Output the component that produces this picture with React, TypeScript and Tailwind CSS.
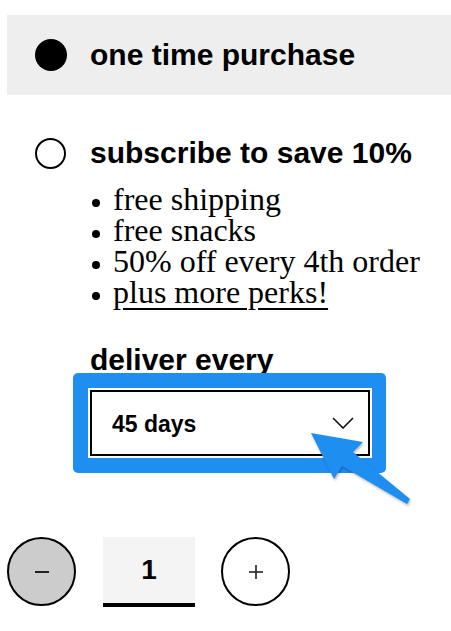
import { useState } from 'react';

const sans = { fontFamily: '"Liberation Sans", Arial, sans-serif' };
const serif = { fontFamily: '"Liberation Serif", "Times New Roman", serif' };

const perks = ['free shipping', 'free snacks', '50% off every 4th order'];

const Radio = ({ checked }: { checked?: boolean }) =>
  checked ? (
    <span className="block w-[32px] h-[32px] rounded-full bg-black shrink-0" />
  ) : (
    <span className="block w-[31px] h-[31px] rounded-full border-2 border-black bg-white shrink-0" />
  );

const Bullet = () => (
  <span className="w-[23px] shrink-0">
    <span className="block mt-[15px] ml-[2px] w-[8px] h-[8px] rounded-full bg-black" />
  </span>
);

const App = () => {
  const [qty, setQty] = useState(1);

  return (
    <div className="relative w-[451px] h-[631px] overflow-hidden bg-white pt-[15px] pl-[7px] text-black" style={sans}>
      {/* one time */}
      <div className="flex items-center h-[80px] bg-[#eeeeee] pl-[28px]">
        <Radio checked />
        <span className="ml-[23px] text-[30px] leading-[36px] font-bold">one time purchase</span>
      </div>

      {/* subscribe */}
      <div className="mt-[40px] flex items-center h-[36px] pl-[28px]">
        <Radio />
        <span className="ml-[24px] text-[30px] leading-[36px] font-bold">subscribe to save 10%</span>
      </div>

      <div className="pl-[83px]">
        <ul className="mt-[13px] text-[32px] leading-[31px]" style={serif}>
          {perks.map((p) => (
            <li key={p} className="flex">
              <Bullet />
              <span>{p}</span>
            </li>
          ))}
          <li className="flex">
            <Bullet />
            <a href="#" className="underline decoration-2 underline-offset-[5px]">plus more perks!</a>
          </li>
        </ul>

        <div className="mt-[34px] text-[30px] leading-[36px] font-bold">deliver every</div>

        <div className="relative mt-[12px] w-[280px]">
          <div className="absolute -top-[17px] -bottom-[17px] -left-[17px] -right-[16px] rounded-[5px] bg-[#1f8ef1]" />
          <div className="absolute -inset-[2px] bg-white" />
          <div className="relative flex items-center justify-between h-[66px] border-2 border-black bg-white pl-[20px] pr-[14px]">
            <span className="text-[23px] font-bold mt-[3px]">45 days</span>
            <svg width="22" height="12" viewBox="0 0 22 12" fill="none" stroke="#111" strokeWidth="1.6">
              <polyline points="1,1 11,11 21,1" />
            </svg>
          </div>
        </div>
      </div>

      {/* annotation arrow */}
      <svg
        className="absolute left-0 top-0 pointer-events-none"
        width="451"
        height="631"
        style={{ filter: 'drop-shadow(1px 2px 1px rgba(0,0,0,0.25))' }}
      >
        <polygon
          points="311,433 363,442 353,452 410,499 407,504 342,466 334,479"
          fill="#1f8ef1"
        />
      </svg>

      {/* quantity */}
      <div className="mt-[81px] flex items-start">
        <button
          onClick={() => setQty(Math.max(1, qty - 1))}
          className="flex items-center justify-center w-[69px] h-[69px] rounded-full border-2 border-black bg-[#cccccc]"
        >
          <span className="block w-[14px] h-[2px] bg-[#222]" />
        </button>
        <div className="ml-[27px] flex items-center justify-center w-[92px] h-[70px] bg-[#f4f4f4] border-b-4 border-black text-[28px] font-bold">
          {qty}
        </div>
        <button
          onClick={() => setQty(qty + 1)}
          className="ml-[26px] flex items-center justify-center w-[69px] h-[69px] rounded-full border-2 border-black bg-white"
        >
          <svg width="16" height="16" viewBox="0 0 16 16" stroke="#222" strokeWidth="1.6">
            <line x1="8" y1="1" x2="8" y2="15" />
            <line x1="1" y1="8" x2="15" y2="8" />
          </svg>
        </button>
      </div>
    </div>
  );
};

export default App;
